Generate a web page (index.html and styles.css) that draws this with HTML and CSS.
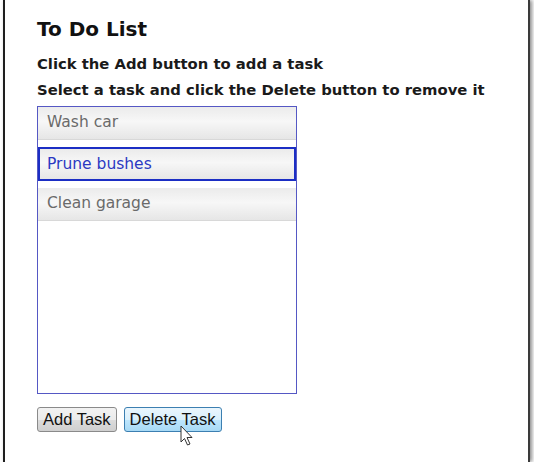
FILE: index.html
```html
<!DOCTYPE html>
<html>
<head>
    <title>To Do List</title>
    <link rel="stylesheet" href="styles.css">
</head>
<body>
    <div class="window">
        <h1>To Do List</h1>
        <p class="hint">Click the Add button to add a task</p>
        <p class="hint">Select a task and click the Delete button to remove it</p>

        <!-- Liste des tâches -->
        <ul id="tasks" class="tasks">
            <li class="task">Wash car</li>
            <li class="task selected">Prune bushes</li>
            <li class="task">Clean garage</li>
        </ul>

        <div class="buttons">
            <button id="add">Add Task</button>
            <button id="delete" class="hover">Delete Task</button>
            <svg class="cursor" width="14" height="22" viewBox="0 0 14 22">
                <path d="M1 1 L1 17 L4.5 13.5 L7.5 20 L10 19 L7 12.5 L12 12.5 Z" fill="#fff" stroke="#333" stroke-width="1" stroke-linejoin="round"/>
            </svg>
        </div>
    </div>
</body>
</html>
```

FILE: styles.css
```css
/* Page */
body {
    margin: 0;
    background: #fff;
    font-family: "DejaVu Sans", Verdana, sans-serif;
}

.window {
    box-sizing: border-box;
    width: 527px;
    height: 462px;
    margin-left: 3px;
    padding: 17px 0 0 32px;
    border-left: 2px solid #1e1e1e;
    border-right: 2px solid #3a3a3a;
    box-shadow: 2px 0 4px #8a8a8a;
    background: #fff;
}

h1 {
    margin: 0 0 13px;
    font-size: 20px;
    line-height: 24px;
    font-weight: bold;
    color: #111;
}

.hint {
    margin: 0 0 7px;
    font-size: 14.8px;
    line-height: 19px;
    font-weight: bold;
    color: #1a1a1a;
}

/* Liste */
.tasks {
    list-style: none;
    width: 258px;
    height: 286px;
    margin: 5px 0 0;
    padding: 0;
    border: 1px solid #5558c4;
}

.task {
    height: 32px;
    line-height: 31px;
    margin-bottom: 7px;
    padding-left: 9px;
    font-size: 15.5px;
    color: #6a6a6a;
    border-bottom: 1px solid #d8d8d8;
    background: linear-gradient(#ebebeb, #f7f7f7 45%, #e6e6e6);
}

.task.selected {
    height: 30px;
    line-height: 30px;
    padding-left: 7px;
    color: #2b39c2;
    border: 2px solid #1b2ec4;
}

/* Boutons */
.buttons {
    position: relative;
    display: flex;
    gap: 7px;
    margin-top: 13px;
}

button {
    font-family: "Liberation Sans", Arial, sans-serif;
    font-size: 16.5px;
    height: 25px;
    padding: 0 5px;
    color: #111;
    border: 1px solid #8a8a8a;
    border-radius: 3px;
    background: linear-gradient(#f2f2f2, #ebebeb 50%, #dcdcdc 51%, #cfcfcf);
}

button.hover {
    border-color: #3c7fb1;
    background: linear-gradient(#eaf6fd, #d9f0fc 50%, #bee6fd 51%, #a7d9f5);
}

.cursor {
    position: absolute;
    left: 143px;
    top: 18px;
}
```
